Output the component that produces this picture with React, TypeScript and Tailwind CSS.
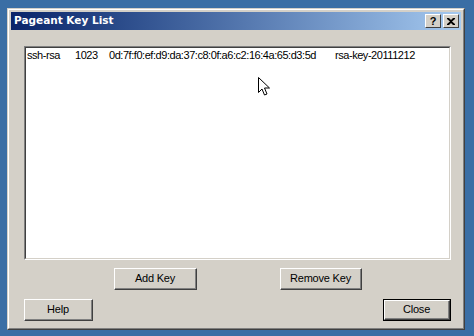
import React from 'react';

const font = { fontFamily: '"Liberation Sans", Arial, sans-serif' };

const Button = ({ label, className = '', isDefault = false }: { label: string; className?: string; isDefault?: boolean }) => (
    <div className={`h-[22px] ${isDefault ? 'border border-black' : ''} ${className}`}>
        <div className="h-full w-full border-t border-l border-white border-r border-b border-r-[#404040] border-b-[#404040] bg-[#d4d0c8]">
            <div className="h-full w-full border-r border-b border-[#808080] flex items-center justify-center text-[11px] tracking-[-0.2px] text-black">
                {label}
            </div>
        </div>
    </div>
);

export default function App() {
    return (
        <div className="w-[474px] h-[336px] bg-[#3a6ea5] pt-[8px] pl-[7px] overflow-hidden" style={font}>
            {/* Dialog */}
            <div className="w-[458px] h-[322px] bg-[#d4d0c8] border-t border-l border-[#d4d0c8] border-r border-b border-r-[#404040] border-b-[#404040]">
                <div className="h-full w-full border-t border-l border-white border-r border-b border-r-[#808080] border-b-[#808080] p-[2px] flex flex-col">

                    {/* Title bar */}
                    <div className="h-[18px] flex items-center justify-between pl-[3px] pr-[2px] bg-gradient-to-r from-[#0a246a] to-[#a6caf0]">
                        <span className="font-bold text-white" style={{ fontFamily: '"DejaVu Sans", sans-serif', fontSize: '10.5px' }}>Pageant Key List</span>
                        <div className="flex gap-[2px]">
                            <div className="w-[16px] h-[14px] bg-[#d4d0c8] border-t border-l border-white border-r border-b border-r-[#404040] border-b-[#404040] flex items-center justify-center text-[11px] font-bold leading-none text-black">?</div>
                            <div className="w-[16px] h-[14px] bg-[#d4d0c8] border-t border-l border-white border-r border-b border-r-[#404040] border-b-[#404040] flex items-center justify-center">
                                <svg width="8" height="7" viewBox="0 0 8 7">
                                    <path d="M0 0h2l2 2 2-2h2v1L5 3.5 8 6v1H6L4 5 2 7H0V6l3-2.5L0 1z" fill="#000" />
                                </svg>
                            </div>
                        </div>
                    </div>

                    {/* Content */}
                    <div className="flex-1 pl-[13px] pr-[11px] pt-[16px] flex flex-col">
                        {/* List box */}
                        <div className="relative w-[427px] h-[214px] bg-white border-t border-l border-[#808080] border-r border-b border-r-white border-b-white">
                            <div className="h-full w-full border-t border-l border-[#404040] border-r border-b border-r-[#d4d0c8] border-b-[#d4d0c8] pl-[1px] pt-[1px]">
                                <div className="flex text-[11px] text-black leading-[13px] whitespace-pre tracking-[-0.45px]">
                                    <span className="w-[48px]">ssh-rsa</span>
                                    <span className="w-[34px]">1023</span>
                                    <span className="w-[226px]">0d:7f:f0:ef:d9:da:37:c8:0f:a6:c2:16:4a:65:d3:5d</span>
                                    <span>rsa-key-20111212</span>
                                </div>
                            </div>
                            {/* Mouse cursor */}
                            <svg className="absolute left-[233px] top-[30px]" width="13" height="20" viewBox="0 0 13 20">
                                <path d="M0.5 0.5 L0.5 15.5 L4 12 L6.5 18 L9 17 L6.5 11 L11.5 11 Z" fill="#fff" stroke="#000" strokeWidth="1" />
                            </svg>
                        </div>

                        {/* Add / Remove row */}
                        <div className="flex mt-[8px] pl-[90px] gap-[83px]">
                            <Button label="Add Key" className="w-[83px]" />
                            <Button label="Remove Key" className="w-[82px]" />
                        </div>

                        {/* Help / Close row */}
                        <div className="flex justify-between w-[427px] mt-[9px]">
                            <Button label="Help" className="w-[69px]" />
                            <Button label="Close" className="w-[68px]" isDefault />
                        </div>
                    </div>
                </div>
            </div>
        </div>
    );
}
